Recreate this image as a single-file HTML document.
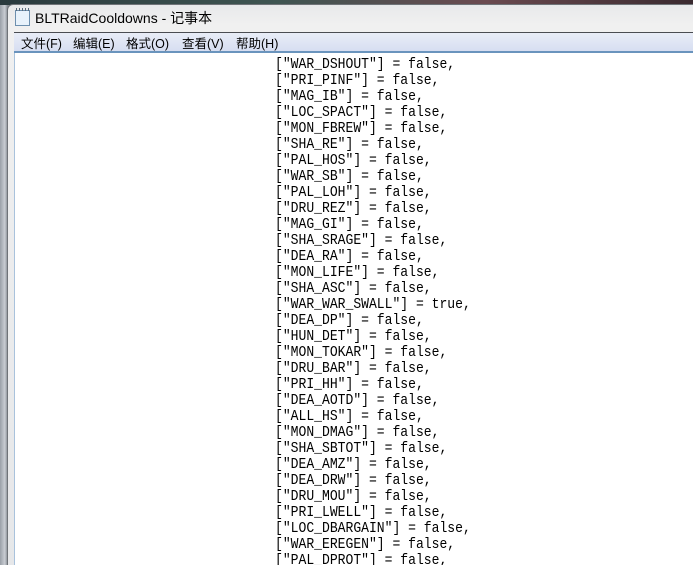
<!DOCTYPE html>
<html><head><meta charset="utf-8"><style>
*{margin:0;padding:0;box-sizing:border-box}
html,body{width:693px;height:565px;overflow:hidden}
body{background:#8a8f96;position:relative;font-family:"Liberation Sans","Noto Sans CJK SC",sans-serif}
#top{position:absolute;left:0;top:0;width:693px;height:5px;background:linear-gradient(90deg,#2a3a3e,#3f5552 40%,#6a4a50 70%,#3a2a30)}
#left{position:absolute;left:0;top:5px;width:8px;height:560px;background:linear-gradient(90deg,#9aa0a8,#c8ccd2 60%,#7b8088)}
#frame{position:absolute;left:7px;top:4px;width:700px;height:570px;background:linear-gradient(#e8e9eb,#f0f0f0 20px,#e6e7e9);border:1px solid #6f7378;border-radius:6px 6px 0 0}
#title{position:absolute;left:35px;top:8px;font-size:14px;color:#000}
#icon{position:absolute;left:15px;top:10px;width:15px;height:16px;background:#e8f2fb;border:1px solid #6d8fae}
#icon:before{content:"";position:absolute;left:0;top:-3px;width:13px;height:3px;background:repeating-linear-gradient(90deg,#5a6b7a 0 1px,transparent 1px 3px)}
#menu{position:absolute;left:14px;top:32px;width:690px;height:21px;background:linear-gradient(#e9edf7,#d7def1);border-top:1px solid #4a4d52;border-bottom:2px solid #6a94bd;font-size:12.5px}
#menu span{position:absolute;top:0px}
#edit{position:absolute;left:14px;top:53px;width:690px;height:520px;background:#fff;border-left:1px solid #a9c2dc}
pre{position:absolute;left:260px;top:4px;font-family:"Liberation Mono",monospace;font-size:15px;line-height:16px;color:#000;transform:scaleX(0.87);transform-origin:0 0}
</style></head><body>
<div id="top"></div><div id="left"></div>
<div id="frame"></div>
<div id="icon"></div>
<div id="title">BLTRaidCooldowns - 记事本</div>
<div id="menu"><span style="left:7px">文件(F)</span><span style="left:59px">编辑(E)</span><span style="left:112px">格式(O)</span><span style="left:168px">查看(V)</span><span style="left:222px">帮助(H)</span></div>
<div id="edit"><pre>["WAR_DSHOUT"] = false,
["PRI_PINF"] = false,
["MAG_IB"] = false,
["LOC_SPACT"] = false,
["MON_FBREW"] = false,
["SHA_RE"] = false,
["PAL_HOS"] = false,
["WAR_SB"] = false,
["PAL_LOH"] = false,
["DRU_REZ"] = false,
["MAG_GI"] = false,
["SHA_SRAGE"] = false,
["DEA_RA"] = false,
["MON_LIFE"] = false,
["SHA_ASC"] = false,
["WAR_WAR_SWALL"] = true,
["DEA_DP"] = false,
["HUN_DET"] = false,
["MON_TOKAR"] = false,
["DRU_BAR"] = false,
["PRI_HH"] = false,
["DEA_AOTD"] = false,
["ALL_HS"] = false,
["MON_DMAG"] = false,
["SHA_SBTOT"] = false,
["DEA_AMZ"] = false,
["DEA_DRW"] = false,
["DRU_MOU"] = false,
["PRI_LWELL"] = false,
["LOC_DBARGAIN"] = false,
["WAR_EREGEN"] = false,
["PAL_DPROT"] = false,</pre></div>
</body></html>
